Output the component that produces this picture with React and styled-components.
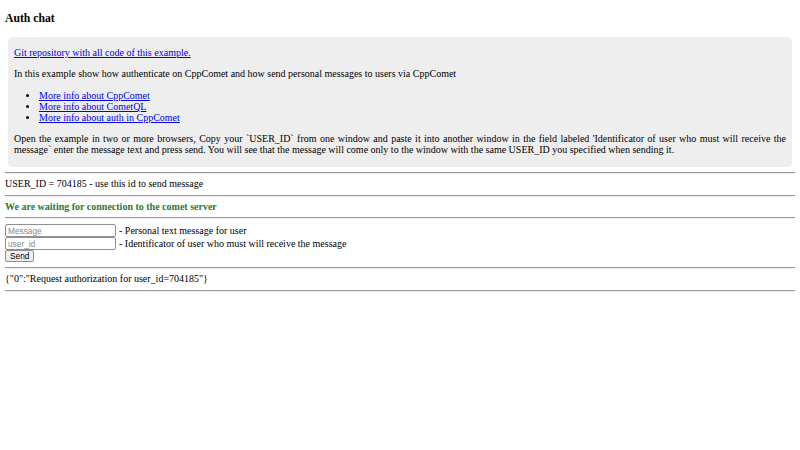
import React from "react";
import styled, { createGlobalStyle } from "styled-components";

const Global = createGlobalStyle`
  html, body { background: #fff; }
  body {
    margin: 5px;
    font-family: "Liberation Serif", "Times New Roman", serif;
    font-size: 10px;
    color: #000;
  }
`;

const Title = styled.h3`
  font-size: 11.7px;
  font-weight: bold;
  margin: 7px 0 12px;
`;

const InfoBox = styled.div`
  background: #eeeeee;
  border-radius: 5px;
  margin: 0 3px 3px;
  padding: 10px 6px 12px;
`;

const P = styled.p`
  margin: ${(p) => (p.$first ? "0" : "10px")} 0 0;
  text-align: ${(p) => (p.$justify ? "justify" : "left")};
`;

const Link = styled.a`
  color: #0000ee;
  text-decoration: underline;
`;

const List = styled.ul`
  margin: 11px 0 10px;
  padding-left: 25px;
  list-style: disc;
`;

const Rule = styled.hr`
  border: none;
  border-top: 1px solid #9a9a9a;
  border-bottom: 1px solid #eeeeee;
  margin: 5px 0;
  height: 0;
`;

const Line = styled.div`
  line-height: 10.5px;
  color: ${(p) => p.$color || "#000"};
  font-weight: ${(p) => (p.$bold ? "bold" : "normal")};
`;

const Form = styled.div`
  display: flex;
  flex-direction: column;
  align-items: flex-start;
`;

const Field = styled.div`
  display: flex;
  align-items: center;
  gap: 3px;
  line-height: 13px;
`;

const Input = styled.input`
  box-sizing: border-box;
  width: 111px;
  height: 13px;
  padding: 0 2px;
  margin: 0;
  font-family: "Liberation Sans", Arial, sans-serif;
  font-size: 8.3px;
  border: 1px solid #8f8f8f;
  border-radius: 2px;
  background: #fff;
  &::placeholder { color: #8a8a8a; }
`;

const Button = styled.button`
  box-sizing: border-box;
  height: 12px;
  padding: 0 4px;
  margin: 0;
  font-family: "Liberation Sans", Arial, sans-serif;
  font-size: 8.3px;
  line-height: 10px;
  border: 1px solid #8f8f8f;
  border-radius: 2px;
  background: #efefef;
  color: #000;
`;

export default function App() {
  return (
    <>
      <Global />
      <Title>Auth chat</Title>
      <InfoBox>
        <P $first>
          <Link href="#">Git repository with all code of this example.</Link>
        </P>
        <P>
          In this example show how authenticate on CppComet and how send personal messages to users via CppComet
        </P>
        <List>
          <li><Link href="#">More info about CppComet</Link></li>
          <li><Link href="#">More info about CometQL</Link></li>
          <li><Link href="#">More info about auth in CppComet</Link></li>
        </List>
        <P $first $justify>
          Open the example in two or more browsers, Copy your `USER_ID` from one window and paste it into another window in the field labeled 'Identificator of user who must will receive the message` enter the message text and press send. You will see that the message will come only to the window with the same USER_ID you specified when sending it.
        </P>
      </InfoBox>
      <Rule />
      <Line>USER_ID = 704185 - use this id to send message</Line>
      <Rule />
      <Line $bold $color="#2a7a2a">We are waiting for connection to the comet server</Line>
      <Rule />
      <Form>
        <Field>
          <Input placeholder="Message" />
          <span>- Personal text message for user</span>
        </Field>
        <Field>
          <Input placeholder="user_id" />
          <span>- Identificator of user who must will receive the message</span>
        </Field>
        <Button>Send</Button>
      </Form>
      <Rule />
      <Line>{'{"0":"Request authorization for user_id=704185"}'}</Line>
      <Rule />
    </>
  );
}
